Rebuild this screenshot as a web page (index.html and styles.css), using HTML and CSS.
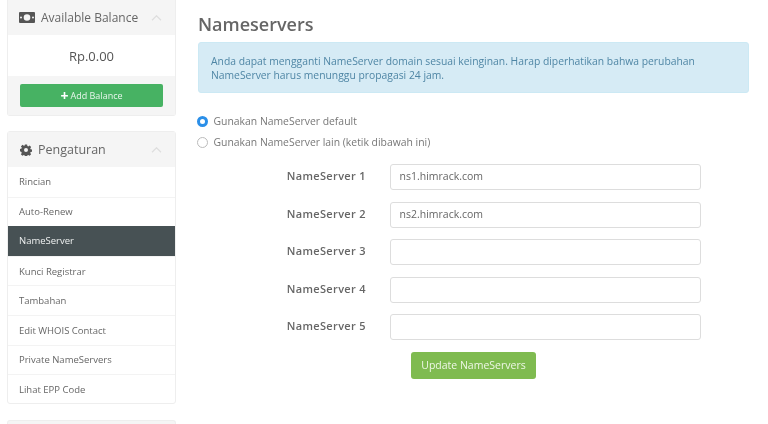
FILE: index.html
```html
<!DOCTYPE html>
<html lang="id">
<head>
<meta charset="utf-8">
<title>Nameservers</title>
<link rel="stylesheet" href="styles.css">
</head>
<body>
<div class="page">
  <aside class="sidebar">
    <section class="panel panel-balance">
      <header class="panel-head">
        <svg class="head-icon money" viewBox="0 0 16 11" aria-hidden="true"><path fill-rule="evenodd" d="M1 0h14a1 1 0 0 1 1 1v9a1 1 0 0 1-1 1H1a1 1 0 0 1-1-1V1a1 1 0 0 1 1-1zM8 2.2a3.3 3.3 0 1 0 0 6.6 3.3 3.3 0 0 0 0-6.6zM2 4.5a1 1 0 1 0 0 2 1 1 0 0 0 0-2zM14 4.500a1 1 0 1 0 0 2 1 1 0 0 0 0-2z"/></svg>
        <span class="head-title">Available Balance</span>
        <svg class="chevron" viewBox="0 0 14 8" aria-hidden="true"><path d="M1 7l6-6 6 6"/></svg>
      </header>
      <div class="balance">Rp.0.00</div>
      <div class="panel-foot"><a class="btn-add"><span class="plus">+</span> Add Balance</a></div>
    </section>

    <section class="panel panel-settings">
      <header class="panel-head">
        <svg class="head-icon gear" viewBox="0 0 24 24" aria-hidden="true"><path fill-rule="evenodd" d="M9.800 1h4.400l.6 3.200 1.700.7 2.700-1.800 3.100 3.100-1.800 2.700.7 1.700 3.200.6v4.400l-3.200.6-.7 1.700 1.800 2.700-3.100 3.100-2.700-1.800-1.700.7-.6 3.200H9.800l-.6-3.200-1.700-.7-2.700 1.800-3.100-3.100 1.800-2.700-.7-1.700L-.2 14.200V9.800l3.200-.6.7-1.700-1.800-2.700 3.100-3.100 2.700 1.800 1.700-.7zM12 8a4 4 0 1 0 0 8 4 4 0 0 0 0-8z"/></svg>
        <span class="head-title title-settings">Pengaturan</span>
        <svg class="chevron" viewBox="0 0 14 8" aria-hidden="true"><path d="M1 7l6-6 6 6"/></svg>
      </header>
      <nav class="menu">
        <a class="item">Rincian</a>
        <a class="item">Auto-Renew</a>
        <a class="item active">NameServer</a>
        <a class="item">Kunci Registrar</a>
        <a class="item">Tambahan</a>
        <a class="item">Edit WHOIS Contact</a>
        <a class="item">Private NameServers</a>
        <a class="item">Lihat EPP Code</a>
      </nav>
    </section>

    <section class="panel panel-next"></section>
  </aside>

  <main class="content">
    <h1 class="title">Nameservers</h1>
    <div class="alert">Anda dapat mengganti NameServer domain sesuai keinginan. Harap diperhatikan bahwa perubahan NameServer harus menunggu propagasi 24 jam.</div>

    <div class="radios">
      <label class="radio"><span class="dot checked"></span>Gunakan NameServer default</label>
      <label class="radio"><span class="dot"></span>Gunakan NameServer lain (ketik dibawah ini)</label>
    </div>

    <form class="ns-form">
      <div class="row"><label class="ns-label">NameServer 1</label><div class="ns-input">ns1.himrack.com</div></div>
      <div class="row"><label class="ns-label">NameServer 2</label><div class="ns-input">ns2.himrack.com</div></div>
      <div class="row"><label class="ns-label">NameServer 3</label><div class="ns-input"></div></div>
      <div class="row"><label class="ns-label">NameServer 4</label><div class="ns-input"></div></div>
      <div class="row"><label class="ns-label">NameServer 5</label><div class="ns-input"></div></div>
      <a class="btn-update">Update NameServers</a>
    </form>
  </main>
</div>
</body>
</html>
```

FILE: styles.css
```css
* { box-sizing: border-box; }

html, body {
  margin: 0;
  height: 424px;
  overflow: hidden;
  background: #fff;
}

body {
  font-family: "Open Sans", "Liberation Sans", sans-serif;
  color: #666;
  filter: blur(0.4px);
}

.page {
  display: flex;
  gap: 22px;
  padding-left: 7px;
  height: 424px;
  overflow: hidden;
}

/* Sidebar */
.sidebar {
  width: 169px;
  flex: none;
}

.panel {
  border: 1px solid #eee;
  border-radius: 3px;
  background: #fff;
}

.panel-balance {
  border-top: 0;
  border-radius: 0 0 3px 3px;
  margin-bottom: 15px;
  height: 116px;
}

.panel-settings {
  margin-bottom: 16px;
  height: 273px;
}

.panel-next {
  height: 4px;
  border-bottom: 0;
  border-radius: 3px 3px 0 0;
  background: #f5f5f5;
}

.panel-head {
  display: flex;
  align-items: center;
  height: 35px;
  padding: 0 13px 0 11px;
  background: #f5f5f5;
}

.head-icon {
  flex: none;
  fill: #555;
}

.money {
  width: 16px;
  height: 11px;
  margin-right: 6px;
}

.gear {
  width: 12px;
  height: 12px;
  margin-left: 1px;
  margin-right: 6px;
}

.head-title {
  flex: 1;
  font-size: 12px;
  color: #666;
  white-space: nowrap;
}

.title-settings {
  font-size: 12.500px;
  padding-bottom: 1px;
}

.chevron {
  flex: none;
  width: 11px;
  height: 6px;
  fill: none;
  stroke: #ddd;
  stroke-width: 1.500;
}

.balance {
  height: 41px;
  display: flex;
  align-items: center;
  justify-content: center;
  font-size: 13px;
  color: #555;
}

.panel-foot {
  height: 39px;
  padding: 8px 12px 0;
  background: #f5f5f5;
}

.btn-add {
  display: flex;
  align-items: center;
  justify-content: center;
  gap: 2px;
  height: 23px;
  border-radius: 2px;
  background: #47b263;
  color: #e8f6ec;
  font-size: 9px;
}

.plus {
  font-size: 14px;
  font-weight: 700;
  line-height: 1;
  color: #fff;
}

.menu {
  display: flex;
  flex-direction: column;
}

.item {
  display: flex;
  align-items: center;
  flex: none;
  height: 29.600px;
  padding-left: 11px;
  font-size: 9.500px;
  color: #666;
  border-top: 1px solid #f3f3f3;
}

.item:first-child { border-top: 0; }

.item.active {
  background: #475154;
  color: #eef0f0;
  border-top: 0;
}

/* Main */
.content {
  width: 551px;
  flex: none;
}

.title {
  margin: 0;
  padding-top: 12px;
  height: 42px;
  font-size: 18px;
  line-height: 24px;
  font-weight: 600;
  color: #666;
}

.alert {
  height: 51px;
  padding: 11px 12px;
  border: 1px solid #cce9f4;
  border-radius: 3px;
  background: #d6ebf5;
  color: #4f86a5;
  font-size: 10.350px;
  line-height: 14px;
}

.radios {
  display: flex;
  flex-direction: column;
  gap: 7px;
  margin-top: 21px;
}

.radio {
  display: flex;
  align-items: center;
  height: 14px;
  font-size: 10.400px;
  color: #777;
}

.dot {
  flex: none;
  width: 11px;
  height: 11px;
  margin-left: -1px;
  margin-right: 5.500px;
  border: 1px solid #bbb;
  border-radius: 50%;
  background: #fff;
}

.dot.checked {
  border: 3.500px solid #2b8fe8;
}

.ns-form {
  display: flex;
  flex-direction: column;
  gap: 11.500px;
  margin-top: 15px;
}

.row {
  display: flex;
  align-items: center;
}

.ns-label {
  width: 168px;
  flex: none;
  padding-bottom: 3px;
  text-align: right;
  font-size: 11px;
  font-weight: 600;
  letter-spacing: 0.350px;
  color: #666;
}

.ns-input {
  width: 311px;
  height: 26px;
  margin-left: 24px;
  padding: 0 8.500px;
  border: 1px solid #ddd;
  border-radius: 3px;
  background: #fff;
  font-size: 10.500px;
  line-height: 22px;
  color: #666;
}

.btn-update {
  display: flex;
  align-items: center;
  justify-content: center;
  align-self: flex-start;
  width: 125px;
  height: 27px;
  margin-left: 213px;
  border-radius: 3px;
  background: #7fbb50;
  color: #eef7e6;
  font-size: 10.500px;
}
```
